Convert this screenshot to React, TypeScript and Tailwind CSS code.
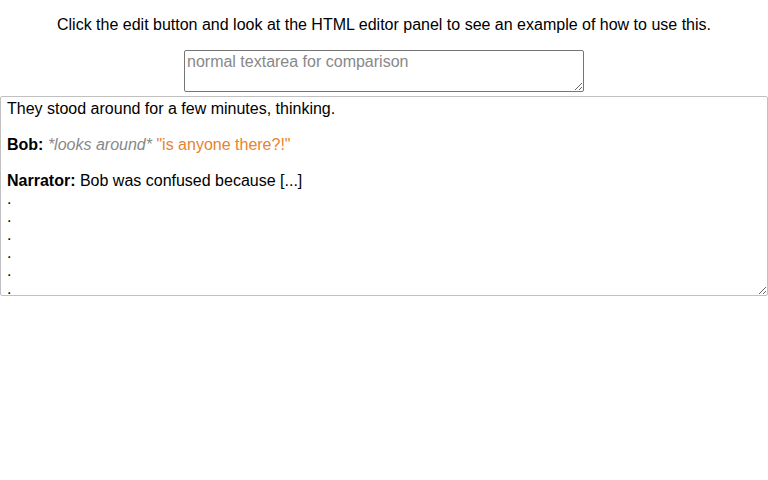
export default function App() {
  const dots = ['.', '.', '.', '.', '.', '.'];

  return (
    <div className="font-['Liberation_Sans',Arial,sans-serif] text-base text-black bg-white min-h-screen">
      <p className="text-center my-4 leading-[18px]">
        Click the edit button and look at the HTML editor panel to see an example of how to use this.
      </p>

      <div className="flex justify-center">
        <textarea
          rows={2}
          placeholder="normal textarea for comparison"
          className="w-[400px] h-[42px] border border-[#767676] rounded-[2px] p-[2px] leading-[18px] placeholder:text-[#888]"
        />
      </div>

      {/* story box */}
      <div className="mt-1 h-[200px] w-full border border-[#c0c0c0] rounded-[2px] overflow-hidden resize pl-[6px] pt-[3px] leading-[18px] whitespace-pre-wrap">
        <div>They stood around for a few minutes, thinking.</div>
        <div>{'\u00a0'}</div>
        <div>
          <b>Bob:</b> <i className="text-[#888]">*looks around*</i>{' '}
          <span className="text-[#e8832f]">"is anyone there?!"</span>
        </div>
        <div>{'\u00a0'}</div>
        <div>
          <b>Narrator:</b> Bob was confused because [...]
        </div>
        {dots.map((d, i) => (
          <div key={i}>{d}</div>
        ))}
      </div>
    </div>
  );
}
